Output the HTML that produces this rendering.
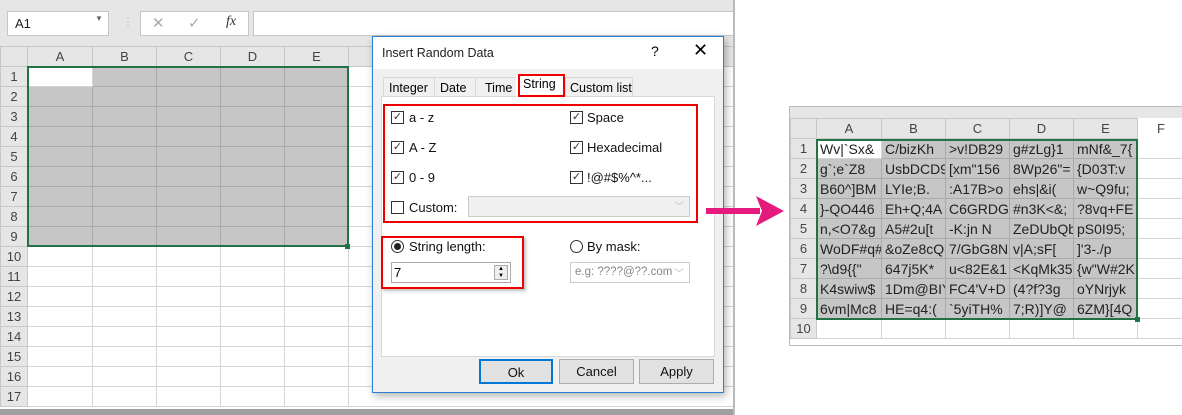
<!DOCTYPE html>
<html><head><meta charset="utf-8"><style>
*{box-sizing:border-box;margin:0;padding:0}
body{width:1182px;height:415px;background:#fff;position:relative;overflow:hidden;font-family:"Liberation Sans",sans-serif;}
.a{position:absolute}
table{border-collapse:collapse;table-layout:fixed;position:absolute}
td{border:1px solid #d4d4d4;height:20px;padding:0 0 0 3px;font-size:14px;color:#222;white-space:nowrap;overflow:hidden}
.hd td{background:#e6e6e6;color:#444;text-align:center;border-color:#c8c8c8;padding:0;font-size:13px}
td.rh{background:#e6e6e6;color:#444;text-align:center;border-color:#c8c8c8;padding:0;font-size:13px}
td.g{background:#c6c6c6;border-color:#aaa}
.cb{position:absolute;width:13px;height:13px;border:1px solid #333;background:#fff;font-size:11px;line-height:11px;text-align:center;color:#333}
.lbl{position:absolute;font-size:13px;color:#111}
.btn{position:absolute;height:25px;border:1px solid #adadad;background:#e1e1e1;font-size:13px;text-align:center;line-height:23px;color:#111}
</style></head><body>
<!-- left excel -->
<div class="a" style="left:0;top:0;width:734px;height:46px;background:#e6e6e6;border-right:1px solid #bbb"></div>
<div class="a" style="left:7px;top:11px;width:102px;height:25px;background:#fff;border:1px solid #c6c6c6;font-size:13px;padding:4px 0 0 7px;color:#222">A1<span style="position:absolute;left:87px;top:2px;font-size:8px;color:#666">▼</span></div>
<div class="a" style="left:123px;top:17px;color:#aaa;font-size:10px">⋮</div>
<div class="a" style="left:140px;top:11px;width:109px;height:25px;background:#fff;border:1px solid #c6c6c6;font-size:15px;color:#aaa"><span style="position:absolute;left:11px;top:2px">✕</span><span style="position:absolute;left:47px;top:2px">✓</span><span style="position:absolute;left:85px;top:2px;color:#333;font-style:italic;font-family:'Liberation Serif';font-size:14px">fx</span></div>
<div class="a" style="left:253px;top:11px;width:481px;height:25px;background:#fff;border:1px solid #c6c6c6"></div>
<table style="left:0;top:46px;width:734px">
<colgroup><col style="width:27px"><col style="width:65px"><col style="width:64px"><col style="width:64px"><col style="width:64px"><col style="width:64px"><col style="width:386px"></colgroup>
<tr class="hd"><td></td><td>A</td><td>B</td><td>C</td><td>D</td><td>E</td><td></td></tr>
<tr><td class="rh">1</td><td></td><td class="g"></td><td class="g"></td><td class="g"></td><td class="g"></td><td></td></tr>
<tr><td class="rh">2</td><td class="g"></td><td class="g"></td><td class="g"></td><td class="g"></td><td class="g"></td><td></td></tr>
<tr><td class="rh">3</td><td class="g"></td><td class="g"></td><td class="g"></td><td class="g"></td><td class="g"></td><td></td></tr>
<tr><td class="rh">4</td><td class="g"></td><td class="g"></td><td class="g"></td><td class="g"></td><td class="g"></td><td></td></tr>
<tr><td class="rh">5</td><td class="g"></td><td class="g"></td><td class="g"></td><td class="g"></td><td class="g"></td><td></td></tr>
<tr><td class="rh">6</td><td class="g"></td><td class="g"></td><td class="g"></td><td class="g"></td><td class="g"></td><td></td></tr>
<tr><td class="rh">7</td><td class="g"></td><td class="g"></td><td class="g"></td><td class="g"></td><td class="g"></td><td></td></tr>
<tr><td class="rh">8</td><td class="g"></td><td class="g"></td><td class="g"></td><td class="g"></td><td class="g"></td><td></td></tr>
<tr><td class="rh">9</td><td class="g"></td><td class="g"></td><td class="g"></td><td class="g"></td><td class="g"></td><td></td></tr>
<tr><td class="rh">10</td><td></td><td></td><td></td><td></td><td></td><td></td></tr>
<tr><td class="rh">11</td><td></td><td></td><td></td><td></td><td></td><td></td></tr>
<tr><td class="rh">12</td><td></td><td></td><td></td><td></td><td></td><td></td></tr>
<tr><td class="rh">13</td><td></td><td></td><td></td><td></td><td></td><td></td></tr>
<tr><td class="rh">14</td><td></td><td></td><td></td><td></td><td></td><td></td></tr>
<tr><td class="rh">15</td><td></td><td></td><td></td><td></td><td></td><td></td></tr>
<tr><td class="rh">16</td><td></td><td></td><td></td><td></td><td></td><td></td></tr>
<tr><td class="rh">17</td><td></td><td></td><td></td><td></td><td></td><td></td></tr>
</table>
<div class="a" style="left:27px;top:66px;width:322px;height:181px;border:2px solid #217346"></div>
<div class="a" style="left:345px;top:244px;width:5px;height:5px;background:#217346"></div>
<div class="a" style="left:0;top:409px;width:734px;height:6px;background:#a0a0a0"></div>
<div class="a" style="left:733px;top:0;width:2px;height:415px;background:#bbb"></div>

<!-- dialog -->
<div class="a" style="left:372px;top:36px;width:352px;height:357px;background:#f0f0f0;border:1px solid #2b7fd6;box-shadow:2px 3px 8px rgba(0,0,0,.3)">
<div class="a" style="left:0;top:0;width:350px;height:32px;background:#fff"></div>
<div class="a" style="left:9px;top:9px;font-size:12.5px;color:#222">Insert Random Data</div>
<div class="a" style="left:278px;top:6px;font-size:14px">?</div>
<div class="a" style="left:320px;top:3px;font-size:18px">✕</div>
<div class="a" style="left:8px;top:59px;width:334px;height:261px;background:#fff;border:1px solid #d9d9d9"></div>
</div>
<!-- tabs -->
<div class="a" style="left:383px;top:77px;width:250px;height:20px;font-size:12.5px">
<div class="a" style="left:0;top:0;width:52px;height:20px;border:1px solid #d9d9d9;background:#f0f0f0;padding:3px 0 0 5px">Integer</div>
<div class="a" style="left:51px;top:0;width:42px;height:20px;border:1px solid #d9d9d9;background:#f0f0f0;padding:3px 0 0 5px">Date</div>
<div class="a" style="left:92px;top:0;width:42px;height:20px;border:1px solid #d9d9d9;background:#f0f0f0;padding:3px 0 0 9px">Time</div>
<div class="a" style="left:133px;top:-3px;width:50px;height:23px;background:#fff;padding:3px 0 0 7px">String</div>
<div class="a" style="left:135px;top:-3px;width:47px;height:23px;border:2px solid #e00"></div>
<div class="a" style="left:182px;top:0;width:68px;height:20px;border:1px solid #d9d9d9;background:#f0f0f0;padding:3px 0 0 4px">Custom list</div>
</div>
<div class="a" style="left:383px;top:104px;width:315px;height:119px;border:2px solid #e00"></div>
<div class="cb" style="left:391px;top:111px">✓</div><div class="lbl" style="left:409px;top:110px">a - z</div>
<div class="cb" style="left:391px;top:141px">✓</div><div class="lbl" style="left:409px;top:140px">A - Z</div>
<div class="cb" style="left:391px;top:171px">✓</div><div class="lbl" style="left:409px;top:170px">0 - 9</div>
<div class="cb" style="left:391px;top:201px"></div><div class="lbl" style="left:409px;top:200px">Custom:</div>
<div class="cb" style="left:570px;top:111px">✓</div><div class="lbl" style="left:587px;top:110px">Space</div>
<div class="cb" style="left:570px;top:141px">✓</div><div class="lbl" style="left:587px;top:140px">Hexadecimal</div>
<div class="cb" style="left:570px;top:171px">✓</div><div class="lbl" style="left:587px;top:170px">!@#$%^*...</div>
<div class="a" style="left:468px;top:196px;width:222px;height:21px;border:1px solid #ccc;background:#f0f0f0"><span style="position:absolute;right:5px;top:1px;color:#bbb;font-size:10px">﹀</span></div>
<div class="a" style="left:381px;top:236px;width:143px;height:53px;border:2px solid #e00;box-shadow:2px 2px 3px rgba(0,0,0,.25)"></div>
<div class="a" style="left:391px;top:240px;width:13px;height:13px;border:1px solid #333;border-radius:50%;background:#fff"><div style="margin:2px;width:7px;height:7px;border-radius:50%;background:#222"></div></div>
<div class="lbl" style="left:409px;top:239px">String length:</div>
<div class="a" style="left:391px;top:262px;width:120px;height:21px;border:1px solid #aaa;background:#fff;font-size:13px;padding:2px 0 0 2px">7<div style="position:absolute;right:2px;top:2px;width:14px;height:15px;border:1px solid #aaa;background:#eee;font-size:6px;line-height:7px;text-align:center">▲<br>▼</div></div>
<div class="a" style="left:570px;top:240px;width:13px;height:13px;border:1px solid #333;border-radius:50%;background:#fff"></div>
<div class="lbl" style="left:587px;top:239px">By mask:</div>
<div class="a" style="left:570px;top:262px;width:120px;height:21px;border:1px solid #ccc;background:#fff;font-size:11.5px;color:#888;padding:3px 0 0 4px">e.g: ????@??.com<span style="position:absolute;right:5px;top:2px;color:#bbb;font-size:10px">﹀</span></div>
<div class="btn" style="left:479px;top:359px;width:74px;border:2px solid #0078d7">Ok</div>
<div class="btn" style="left:559px;top:359px;width:75px">Cancel</div>
<div class="btn" style="left:639px;top:359px;width:75px">Apply</div>

<!-- arrow -->
<svg class="a" style="left:700px;top:192px" width="90" height="36"><path d="M6 16 H60 V22 H6Z" fill="#e6197f"/><path d="M56 4 L84 19 L56 34 L62 19Z" fill="#e6197f"/></svg>

<!-- right sheet -->
<div class="a" style="left:789px;top:106px;width:393px;height:240px;border:1px solid #bbb;border-right:none;overflow:hidden;background:#fff">
<div class="a" style="left:0;top:0;width:393px;height:11px;background:#e6e6e6"></div>
<table style="left:0;top:11px;width:394px">
<colgroup><col style="width:26px"><col style="width:65px"><col style="width:64px"><col style="width:64px"><col style="width:64px"><col style="width:64px"><col style="width:47px"></colgroup>
<tr class="hd"><td></td><td>A</td><td>B</td><td>C</td><td>D</td><td>E</td><td style="background:#fff;border-color:#fff">F</td></tr>
<tr><td class="rh">1</td><td>Wv|`Sx&amp;</td><td class="g">C/bizKh</td><td class="g">&gt;v!DB29</td><td class="g">g#zLg}1</td><td class="g">mNf&amp;_7{</td><td></td></tr>
<tr><td class="rh">2</td><td class="g">g`;e`Z8</td><td class="g">UsbDCD9</td><td class="g">[xm"156</td><td class="g">8Wp26"=</td><td class="g">{D03T:v</td><td></td></tr>
<tr><td class="rh">3</td><td class="g">B60^]BM</td><td class="g">LYIe;B.</td><td class="g">:A17B&gt;o</td><td class="g">ehs|&amp;i(</td><td class="g">w~Q9fu;</td><td></td></tr>
<tr><td class="rh">4</td><td class="g">}-QO446</td><td class="g">Eh+Q;4A</td><td class="g">C6GRDG:</td><td class="g">#n3K&lt;&amp;;</td><td class="g">?8vq+FE</td><td></td></tr>
<tr><td class="rh">5</td><td class="g">n,&lt;O7&amp;g</td><td class="g">A5#2u[t</td><td class="g">-K:jn N</td><td class="g">ZeDUbQb</td><td class="g">pS0I95;</td><td></td></tr>
<tr><td class="rh">6</td><td class="g">WoDF#q#</td><td class="g">&amp;oZe8cQ</td><td class="g">7/GbG8N</td><td class="g">v|A;sF[</td><td class="g">]'3-./p</td><td></td></tr>
<tr><td class="rh">7</td><td class="g">?\d9{{"</td><td class="g">647j5K*</td><td class="g">u&lt;82E&amp;1</td><td class="g">&lt;KqMk35</td><td class="g">{w"W#2K</td><td></td></tr>
<tr><td class="rh">8</td><td class="g">K4swiw$</td><td class="g">1Dm@BIY</td><td class="g">FC4'V+D</td><td class="g">(4?f?3g</td><td class="g">oYNrjyk</td><td></td></tr>
<tr><td class="rh">9</td><td class="g">6vm|Mc8</td><td class="g">HE=q4:(</td><td class="g">`5yiTH%</td><td class="g">7;R)]Y@</td><td class="g">6ZM}[4Q</td><td></td></tr>
<tr><td class="rh">10</td><td></td><td></td><td></td><td></td><td></td><td></td></tr>
</table>
<div class="a" style="left:26px;top:32px;width:322px;height:181px;border:2px solid #217346"></div>
<div class="a" style="left:345px;top:210px;width:5px;height:5px;background:#217346"></div>
</div>
</body></html>
